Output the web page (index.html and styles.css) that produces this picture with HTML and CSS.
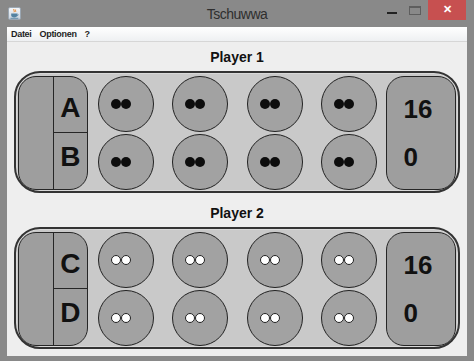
FILE: index.html
```html
<!DOCTYPE html>
<html>
<head>
    <title>Tschuwwa</title>
    <link rel="stylesheet" href="styles.css">
</head>
<body>
    <div class="window">
        <div class="titlebar">
            <svg class="app-icon" width="13" height="13" viewBox="0 0 13 13">
                <defs>
                    <linearGradient id="ig" x1="0" y1="0" x2="0" y2="1">
                        <stop offset="0" stop-color="#f4f7fb"/>
                        <stop offset="1" stop-color="#c9d3de"/>
                    </linearGradient>
                </defs>
                <rect x="0.5" y="0.5" width="12" height="12" rx="1.5" fill="url(#ig)" stroke="#9aa6b2"/>
                <path d="M6 2 C5 3.2 7 3.8 6 5.2 M7.6 2.6 C7 3.4 8.2 3.8 7.6 4.8" stroke="#e76f00" stroke-width="0.9" fill="none"/>
                <path d="M3.2 6.5 H9.2 V8.6 C9.2 9.8 8.2 10.4 6.2 10.4 C4.2 10.4 3.2 9.8 3.2 8.6 Z" fill="#5382a1"/>
                <path d="M9.2 7 C10.6 7 10.6 8.8 9 8.8" stroke="#5382a1" stroke-width="0.8" fill="none"/>
                <rect x="2.4" y="10.8" width="8" height="0.9" fill="#5382a1"/>
            </svg>
            <span class="title">Tschuwwa</span>
            <div class="controls">
                <span class="min"></span>
                <span class="max"></span>
                <span class="close">✕</span>
            </div>
        </div>
        <div class="frame">
            <div class="menubar">
                <span>Datei</span>
                <span>Optionen</span>
                <span>?</span>
            </div>
            <div class="content">
                <div class="player">Player 1</div>
                <div class="board">
                    <div class="store house">
                        <div class="blank"></div>
                        <div class="cell top">A</div>
                        <div class="cell bottom">B</div>
                    </div>
                    <div class="pits">
                        <div class="pit"><span class="dot"></span><span class="dot"></span></div>
                        <div class="pit"><span class="dot"></span><span class="dot"></span></div>
                        <div class="pit"><span class="dot"></span><span class="dot"></span></div>
                        <div class="pit"><span class="dot"></span><span class="dot"></span></div>
                        <div class="pit"><span class="dot"></span><span class="dot"></span></div>
                        <div class="pit"><span class="dot"></span><span class="dot"></span></div>
                        <div class="pit"><span class="dot"></span><span class="dot"></span></div>
                        <div class="pit"><span class="dot"></span><span class="dot"></span></div>
                    </div>
                    <div class="store score">
                        <div class="num top">16</div>
                        <div class="num bottom">0</div>
                    </div>
                </div>

                <div class="player second">Player 2</div>
                <div class="board white">
                    <div class="store house">
                        <div class="blank"></div>
                        <div class="cell top">C</div>
                        <div class="cell bottom">D</div>
                    </div>
                    <div class="pits">
                        <div class="pit"><span class="dot"></span><span class="dot"></span></div>
                        <div class="pit"><span class="dot"></span><span class="dot"></span></div>
                        <div class="pit"><span class="dot"></span><span class="dot"></span></div>
                        <div class="pit"><span class="dot"></span><span class="dot"></span></div>
                        <div class="pit"><span class="dot"></span><span class="dot"></span></div>
                        <div class="pit"><span class="dot"></span><span class="dot"></span></div>
                        <div class="pit"><span class="dot"></span><span class="dot"></span></div>
                        <div class="pit"><span class="dot"></span><span class="dot"></span></div>
                    </div>
                    <div class="store score">
                        <div class="num top">16</div>
                        <div class="num bottom">0</div>
                    </div>
                </div>
            </div>
        </div>
    </div>
</body>
</html>
```

FILE: styles.css
```css
body {
    margin: 0;
    background: #888888;
    font-family: "Liberation Sans", Arial, sans-serif;
}
.window {
    width: 474px;
    height: 361px;
    background: #898989;
    display: flex;
    flex-direction: column;
}
.titlebar {
    height: 27px;
    display: grid;
    grid-template-columns: 1fr auto 1fr;
}
.app-icon {
    margin: 7px 0 0 8px;
}
.title {
    font-size: 14px;
    letter-spacing: -0.5px;
    color: #2e2e2e;
    line-height: 28px;
}
.controls {
    justify-self: end;
    display: flex;
    align-items: flex-start;
    padding-right: 8px;
}
.min {
    width: 10px;
    height: 2px;
    background: #222;
    margin-top: 12px;
}
.max {
    width: 10px;
    height: 6px;
    border: 1px solid #5e5e5e;
    border-top-width: 2px;
    margin: 6px 0 0 12px;
}
.close {
    width: 38px;
    height: 20px;
    margin-left: 7px;
    background: #c75050;
    color: #fff;
    font-size: 11px;
    font-weight: bold;
    line-height: 19px;
    text-align: center;
}
.frame {
    flex: 1;
    padding: 0 7px 5px;
    display: flex;
    flex-direction: column;
}
.menubar {
    height: 14px;
    border-bottom: 1px solid #d6d6d6;
    background: linear-gradient(#ffffff, #eef0f2);
    display: flex;
    gap: 8px;
    padding-left: 4px;
    font-size: 9px;
    font-weight: bold;
    letter-spacing: -0.3px;
    line-height: 14px;
    color: #1e1e1e;
}
.content {
    flex: 1;
    background: #eeeeee;
    padding: 7px 7px 0;
}
.player {
    font-size: 14px;
    font-weight: bold;
    line-height: 16px;
    text-align: center;
    color: #111;
    margin-bottom: 6px;
}
.player.second {
    margin-top: 12px;
}
.board {
    height: 122px;
    box-sizing: border-box;
    border: 2px solid #333;
    border-radius: 26px;
    background: #c9c9c9;
    box-shadow: inset 0 0 0 1px #d8d8d8;
    padding: 2px 2px 0;
    display: flex;
    align-items: center;
}
.store {
    width: 70px;
    height: 114px;
    box-sizing: border-box;
    border: 1.5px solid #262626;
    border-radius: 18px;
    background: #9e9e9e;
    display: grid;
    grid-template-rows: 1fr 1fr;
    overflow: hidden;
}
.house {
    grid-template-columns: 33.5px 1fr;
}
.blank {
    grid-row: 1 / 3;
}
.cell {
    border-left: 1.5px solid #262626;
    display: flex;
    justify-content: center;
    font-size: 28px;
    font-weight: bold;
    line-height: 28px;
    color: #111;
}
.cell.top {
    border-bottom: 1.5px solid #262626;
    align-items: flex-end;
    padding-bottom: 10px;
}
.cell.bottom {
    align-items: flex-start;
    padding-top: 10px;
}
.score {
    padding-left: 16.5px;
}
.num {
    display: flex;
    font-size: 26px;
    font-weight: bold;
    line-height: 26px;
    color: #111;
}
.num.top {
    align-items: flex-end;
    padding-bottom: 11px;
}
.num.bottom {
    align-items: flex-start;
    padding-top: 10.5px;
}
.pits {
    flex: 1;
    display: grid;
    grid-template-columns: repeat(4, 56px);
    grid-template-rows: 56px 56px;
    row-gap: 2px;
    justify-content: space-between;
    padding: 0 9px 0 10px;
}
.pit {
    box-sizing: border-box;
    border: 1.5px solid #222;
    border-radius: 50%;
    background: #a2a2a2;
    display: flex;
    align-items: center;
    justify-content: center;
}
.dot {
    width: 10px;
    height: 10px;
    border-radius: 50%;
    background: #0d0d0d;
    box-sizing: border-box;
}
.dot + .dot {
    margin-right: 10px;
}
.white .dot {
    background: #ffffff;
    border: 1px solid #222;
}
```
